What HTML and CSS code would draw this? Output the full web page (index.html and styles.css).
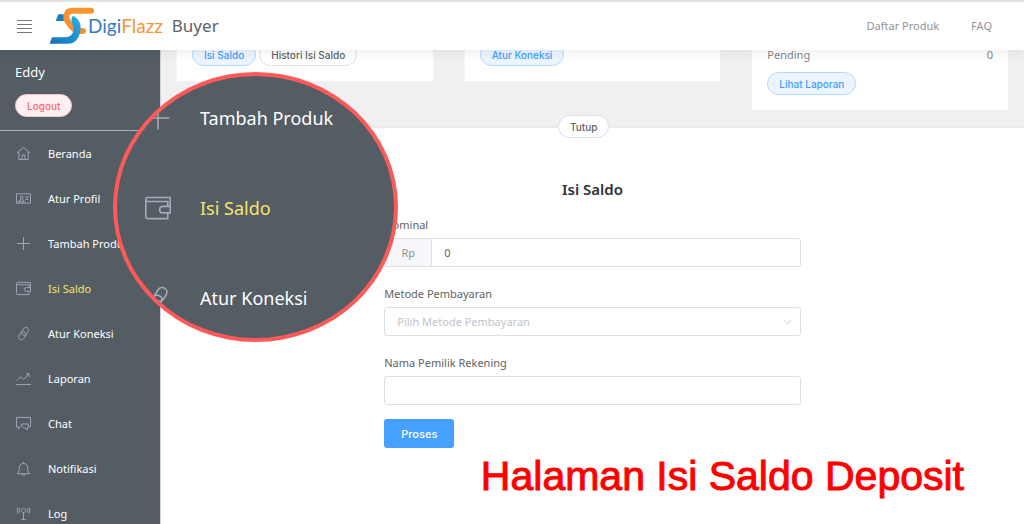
FILE: index.html
```html
<!DOCTYPE html>
<html lang="id">
<head>
<meta charset="utf-8">
<meta name="viewport" content="width=device-width, initial-scale=1">
<title>DigiFlazz Buyer</title>
<link rel="stylesheet" href="styles.css">
</head>
<body>
<svg class="sprite" aria-hidden="true">
  <symbol id="i-home" viewBox="0 0 16 16"><path d="M1 7.5 8 1.5l7 6M3 6.5v8h10v-8M6.500 14.500v-5h3v5"/></symbol>
  <symbol id="i-card" viewBox="0 0 16 16"><path d="M.5 3h15v10H.5zM2.500 11.500c0-1.500 3-1 3-2.500-1.500-1.500-1-4 .5-4s2 2.500.5 4c0 1.500 2.500 1 2.500 2.500zM10 6.500h4M10 9h3"/></symbol>
  <symbol id="i-plus" viewBox="0 0 16 16"><path d="M8 1v14M1 8h14"/></symbol>
  <symbol id="i-wallet" viewBox="0 0 16 16"><path d="M.5 2.500v11q0 1 1 1h12.500v-3M.5 2.500q0-1 1-1h14v9.500M14 7V4H1.500q-1 0-1-1M15.500 7h-4.500a1.800 1.800 0 0 0 0 4h4.500z"/></symbol>
  <symbol id="i-link" viewBox="0 0 16 16"><path d="M8 9.800C5.500 9.300 5.300 7.300 6.300 5.700L8 3c2-3.300 7-.5 5 3l-1.700 2.800C10.500 10 9.300 10.200 8 9.800M8.200 6.400c2.500.5 2.700 2.500 1.700 4.100L8.200 13.200c-2 3.300-7 .5-5-3l1.700-2.800c.8-1.200 2-1.400 3.300-1z"/></symbol>
  <symbol id="i-chart" viewBox="0 0 16 16"><path d="M1 10l4-4 3 3 6-6M10.500 3H14v3.500M0 14.500h16"/></symbol>
  <symbol id="i-chat" viewBox="0 0 16 16"><path d="M5 11.500H4L2.500 14v-2.500h-2v-10h15v10h-1.500M6 8.500h7v4h-1v2.500l-2.500-2.500H8L6 11z"/></symbol>
  <symbol id="i-bell" viewBox="0 0 16 16"><path d="M1.500 13.500h13c-1.500-1.500-2-2.500-2-6 0-6.500-9-6.500-9 0 0 3.500-.5 4.500-2 6zM8 2.500V1M6.500 14a1.500 1.500 0 0 0 3 0"/></symbol>
  <symbol id="i-antenna" viewBox="0 0 16 16"><path d="M8 7v7.500M5.500 14.500h5M8 2.500a2.200 2.200 0 1 0 .01 0M4 2.500q-1 2.200 0 4.500M12 2.500q1 2.200 0 4.500M2 1.500q-1.500 3 0 6.500M14 1.500q1.500 3 0 6.500"/></symbol>
</svg>

<div class="app">
  <header class="topbar">
    <button class="menu" aria-label="Menu"><span></span><span></span><span></span><span></span></button>
    <a class="brand" href="#">
      <svg class="brand-mark" viewBox="147 12 117 120" aria-hidden="true">
        <defs><linearGradient id="blue" x1="0" y1="1" x2="1" y2="0"><stop offset="0" stop-color="#1270b8"/><stop offset="1" stop-color="#2bb0ea"/></linearGradient></defs>
        <path fill="#1a80c4" d="M175 37H205V57H167Z"/>
        <path fill="none" stroke="#f7942f" stroke-width="18" stroke-linecap="round" d="M273 26H217C196 26 196 48 204 60C214 76 224 87 236 87H249"/>
        <path fill="url(#blue)" d="M219 41C236 50 243 64 242 80C239 108 226 125 204 125H149L156 106H194C211 106 220 96 221 82C222 74 215 64 214 56Q213 48 219 41Z"/>
      </svg>
      <span class="brand-name">Digi<em>Flazz</em></span>
      <span class="brand-role">Buyer</span>
    </a>
    <nav class="toplinks"><a href="#">Daftar Produk</a><a href="#">FAQ</a></nav>
  </header>

  <div class="shell">
    <aside class="sidebar">
      <div class="user">
        <div class="user-name">Eddy</div>
        <button class="pill danger">Logout</button>
      </div>
      <nav class="nav">
        <a href="#"><svg><use href="#i-home"/></svg>Beranda</a>
        <a href="#"><svg><use href="#i-card"/></svg>Atur Profil</a>
        <a href="#"><svg><use href="#i-plus"/></svg>Tambah Produk</a>
        <a class="active" href="#"><svg><use href="#i-wallet"/></svg>Isi Saldo</a>
        <a href="#"><svg><use href="#i-link"/></svg>Atur Koneksi</a>
        <a href="#"><svg><use href="#i-chart"/></svg>Laporan</a>
        <a href="#"><svg><use href="#i-chat"/></svg>Chat</a>
        <a href="#"><svg><use href="#i-bell"/></svg>Notifikasi</a>
        <a href="#"><svg><use href="#i-antenna"/></svg>Log</a>
      </nav>
    </aside>

    <main class="content">
      <section class="summary">
        <div class="card"><button class="pill primary">Isi Saldo</button><button class="pill">Histori Isi Saldo</button></div>
        <div class="card"><button class="pill primary">Atur Koneksi</button></div>
        <div class="card report">
          <div class="stat"><span>Pending</span><span>0</span></div>
          <button class="pill primary">Lihat Laporan</button>
        </div>
        <button class="pill collapse">Tutup</button>
      </section>

      <div class="panel">
        <form class="deposit">
          <h1>Isi Saldo</h1>
          <label for="nominal">Nominal</label>
          <div class="field group"><span class="addon">Rp</span><input id="nominal" type="text" value="0"></div>
          <label for="metode">Metode Pembayaran</label>
          <div class="field">
            <select id="metode"><option>Pilih Metode Pembayaran</option></select>
            <svg class="chevron" viewBox="0 0 10 6" aria-hidden="true"><path d="M1 1l4 4 4-4"/></svg>
          </div>
          <label for="nama">Nama Pemilik Rekening</label>
          <div class="field"><input id="nama" type="text"></div>
          <button class="submit" type="button">Proses</button>
        </form>
      </div>
    </main>
  </div>

  <div class="magnifier">
    <div class="zoomed"><svg><use href="#i-plus"/></svg>Tambah Produk</div>
    <div class="zoomed active"><svg><use href="#i-wallet"/></svg>Isi Saldo</div>
    <div class="zoomed"><svg><use href="#i-link"/></svg>Atur Koneksi</div>
  </div>
  <p class="caption">Halaman Isi Saldo Deposit</p>
</div>
</body>
</html>
```
FILE: styles.css
```css
* { box-sizing: border-box; }
body { margin: 0; background: #fff; color: #606266; font: 11px/20px "Noto Sans", sans-serif; }
button, input, select { font: inherit; color: inherit; margin: 0; }
button { cursor: pointer; }
a { color: inherit; text-decoration: none; }
.sprite { position: absolute; width: 0; height: 0; }

.app { position: relative; display: flex; flex-direction: column; height: 100vh; overflow: hidden; }
.topbar {
  position: relative; z-index: 2; flex: none; height: 50px; padding: 0 32px 0 17px;
  display: flex; align-items: center; background: #fff;
  border-top: 2px solid #e2e2e2; box-shadow: 0 2px 10px rgba(0, 0, 0, .08);
}
.menu { display: grid; gap: 3px; width: 15px; padding: 0; border: 0; background: none; }
.menu span { height: 1px; background: #777; }
.brand { display: flex; align-items: center; margin-left: 17px; }
.brand-mark { width: 39px; height: 40px; overflow: visible; }
.brand-name { font: 19px/24px Lato, sans-serif; color: #3c78bd; }
.brand-name em { font-style: normal; color: #f7942f; }
.brand-role { margin-left: 9px; font-size: 17px; line-height: 28px; color: #606266; }
.toplinks { margin-left: auto; display: flex; gap: 32px; color: #909399; }

.shell { flex: 1; display: flex; min-height: 0; }
.sidebar { flex: none; width: 161px; background: #545c64; color: #fff; border-right: 1px solid #d0d2d6; }
.user { height: 81px; padding: 12px 15px 0; border-bottom: 1px solid #b0b3b9; }
.user-name { margin-bottom: 12px; font-size: 13px; }
.nav { display: flex; flex-direction: column; }
.nav a { display: flex; align-items: center; gap: 17px; height: 45px; padding-left: 16px; }
.nav svg { width: 15px; height: 15px; }
.nav svg, .zoomed svg { flex: none; fill: none; stroke: #a3abb8; stroke-width: 1; }
.nav .active, .zoomed.active { color: #f5e66c; }

.pill {
  height: 23px; padding: 0 11px; border: 1px solid #dcdfe6; border-radius: 12px;
  background: #fff; color: #606266; font: 500 10px/20px Inter, sans-serif;
}
.pill.primary { background: #ecf5ff; border-color: #b3d8ff; color: #409eff; }
.pill.danger { background: #fef0f0; border-color: #fbc4c4; color: #f56c6c; }

.content { flex: 1; min-width: 0; }
/* Cards continue underneath the top bar. */
.summary {
  position: relative; display: grid; grid-template-columns: repeat(3, 1fr); gap: 30px; align-items: start;
  margin-top: -50px; padding: 0 15px; background: #f0f0f0; border-bottom: 2px solid #ebebeb;
}
.card { display: flex; gap: 3px; padding: 43px 15px 15px; background: #fff; border: 1px solid #f2f3f6; border-top: 0; border-radius: 0 0 3px 3px; }
.card.report { flex-direction: column; align-items: flex-start; gap: 7px; margin-bottom: 15px; padding-top: 45px; }
.stat { display: flex; justify-content: space-between; width: 100%; color: #808388; }
.collapse { position: absolute; left: 46%; bottom: -12px; }

.panel { padding: 51px 15px 0; }
.deposit { width: 50%; margin: 0 auto; }
.deposit h1 { margin: 0 0 16px; color: #303133; font-size: 15px; line-height: 20px; font-weight: 600; text-align: center; }
.deposit label { display: block; margin-bottom: 3px; }
.field { position: relative; display: flex; height: 29px; margin-bottom: 17px; }
.field input, .field select { flex: 1; min-width: 0; padding: 0 12px; border: 1px solid #dcdfe6; border-radius: 3px; background: #fff; }
.field select { appearance: none; color: #c0c4cc; }
.addon { width: 47px; line-height: 27px; text-align: center; color: #909399; background: #f5f7fa; border: 1px solid #dcdfe6; border-right: 0; border-radius: 3px 0 0 3px; }
.group input { border-radius: 0 3px 3px 0; }
.chevron { position: absolute; right: 9px; top: 12px; width: 9px; height: 6px; fill: none; stroke: #c0c4cc; }
.submit { height: 29px; margin-top: -3px; padding: 0 17px; border: 0; border-radius: 3px; background: #46a0ff; color: #fff; font: 500 11px/20px Inter, sans-serif; display: block; }

.magnifier {
  position: absolute; z-index: 3; left: 113px; top: 72px; width: 285px; height: 270px;
  display: flex; flex-direction: column; justify-content: center; overflow: hidden;
  border: 4px solid #ff5a5a; border-radius: 50%; background: #545c64; color: #fff;
}
.zoomed { flex: none; display: flex; align-items: center; gap: 29px; height: 90px; padding: 2px 0 0 28px; font-size: 18px; }
.zoomed svg { width: 26px; height: 26px; }
.caption { position: absolute; right: 60px; bottom: 24px; margin: 0; color: #f00; font: 41px/48px "Liberation Sans", sans-serif; -webkit-text-stroke: 1px #f00; }
```
